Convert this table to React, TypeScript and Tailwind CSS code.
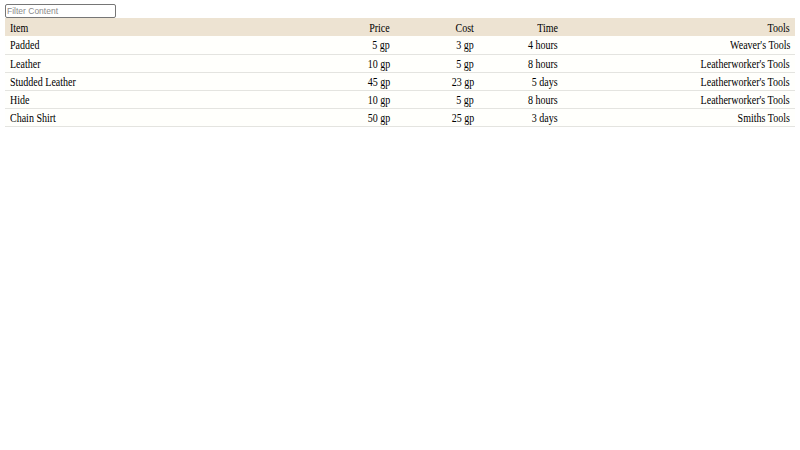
const rows = [
  { item: 'Padded', price: '5 gp', cost: '3 gp', time: '4 hours', tools: "Weaver's Tools" },
  { item: 'Leather', price: '10 gp', cost: '5 gp', time: '8 hours', tools: "Leatherworker's Tools" },
  { item: 'Studded Leather', price: '45 gp', cost: '23 gp', time: '5 days', tools: "Leatherworker's Tools" },
  { item: 'Hide', price: '10 gp', cost: '5 gp', time: '8 hours', tools: "Leatherworker's Tools" },
  { item: 'Chain Shirt', price: '50 gp', cost: '25 gp', time: '3 days', tools: 'Smiths Tools' },
];

// the source font is narrow, so squeeze the glyphs a little
function Txt({ children, right }: { children: React.ReactNode; right?: boolean }) {
  return (
    <span className={right ? 'inline-block origin-right scale-x-[0.77] whitespace-nowrap' : 'inline-block origin-left scale-x-[0.77] whitespace-nowrap'}>
      {children}
    </span>
  );
}

export default function App() {
  return (
    <div className="min-h-[450px] bg-white px-[5px] pt-[4px] text-black">
      <input
        type="text"
        placeholder="Filter Content"
        className="block h-[14px] w-[111px] rounded-[2px] border border-[#767676] px-[1px] text-[8.5px] leading-none placeholder:text-[#8a8a8a] font-['Liberation_Sans',Arial,sans-serif]"
      />
      <table className="w-[790px] table-fixed border-collapse text-[13px] leading-[17px] font-['Liberation_Serif','Times_New_Roman',serif]">
        <thead>
          <tr className="h-[18px] bg-[#ede3d2]">
            <th className="px-[5px] text-left font-normal"><Txt>Item</Txt></th>
            <th className="w-[84px] px-[5px] text-right font-normal"><Txt right>Price</Txt></th>
            <th className="w-[84px] px-[5px] text-right font-normal"><Txt right>Cost</Txt></th>
            <th className="w-[84px] px-[5px] text-right font-normal"><Txt right>Time</Txt></th>
            <th className="w-[232px] px-[5px] text-right font-normal"><Txt right>Tools</Txt></th>
          </tr>
        </thead>
        <tbody>
          {rows.map((r) => (
            <tr key={r.item} className="h-[18px] border-b border-[#e4e4e0] bg-[#fffffc]">
              <td className="px-[5px] text-left"><Txt>{r.item}</Txt></td>
              <td className="px-[5px] text-right"><Txt right>{r.price}</Txt></td>
              <td className="px-[5px] text-right"><Txt right>{r.cost}</Txt></td>
              <td className="px-[5px] text-right"><Txt right>{r.time}</Txt></td>
              <td className="px-[5px] text-right"><Txt right>{r.tools}</Txt></td>
            </tr>
          ))}
        </tbody>
      </table>
    </div>
  );
}
